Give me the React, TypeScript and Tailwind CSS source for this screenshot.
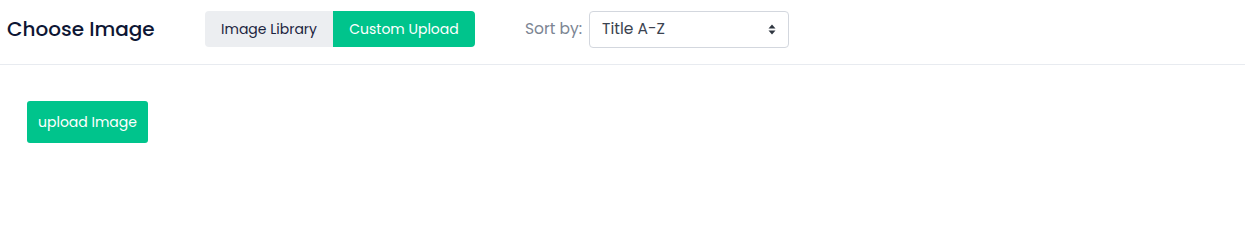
import React from "react";

export default function App() {
  return (
    <div className="w-[1245px] h-[236px] bg-white" style={{ fontFamily: '"Poppins", "Open Sans", sans-serif' }}>
      <div className="flex items-center h-[65px] border-b border-[#e8ebf0] pl-[7px] pb-[6px]">
        <h1 className="w-[198px] text-[20px] font-medium text-[#0d1634] leading-none">Choose Image</h1>
        <div className="flex h-[36px] rounded-[4px] overflow-hidden text-[14px]">
          <button className="w-[128px] bg-[#eceef1] text-[#1c2540]">Image Library</button>
          <button className="w-[142px] bg-[#00c48c] text-white">Custom Upload</button>
        </div>
        <span className="ml-[50px] text-[15.5px] text-[#7c8593]">Sort by:</span>
        <div className="ml-[7px] flex items-center justify-between w-[200px] h-[37px] border border-[#d3d7de] rounded-[4px] pl-[12px] pr-[12px] text-[15.5px] text-[#3b4350]">
          <span>Title A-Z</span>
          <svg width="8" height="11" viewBox="0 0 8 11">
            <path d="M4 0.5 L7.5 4.5 H0.5 Z" fill="#2f3640" />
            <path d="M4 10.5 L7.5 6.5 H0.5 Z" fill="#2f3640" />
          </svg>
        </div>
      </div>
      <div className="pl-[27px] pt-[36px]">
        <button className="h-[42px] w-[121px] rounded-[3px] bg-[#00c48c] text-white text-[14px]">upload Image</button>
      </div>
    </div>
  );
}
